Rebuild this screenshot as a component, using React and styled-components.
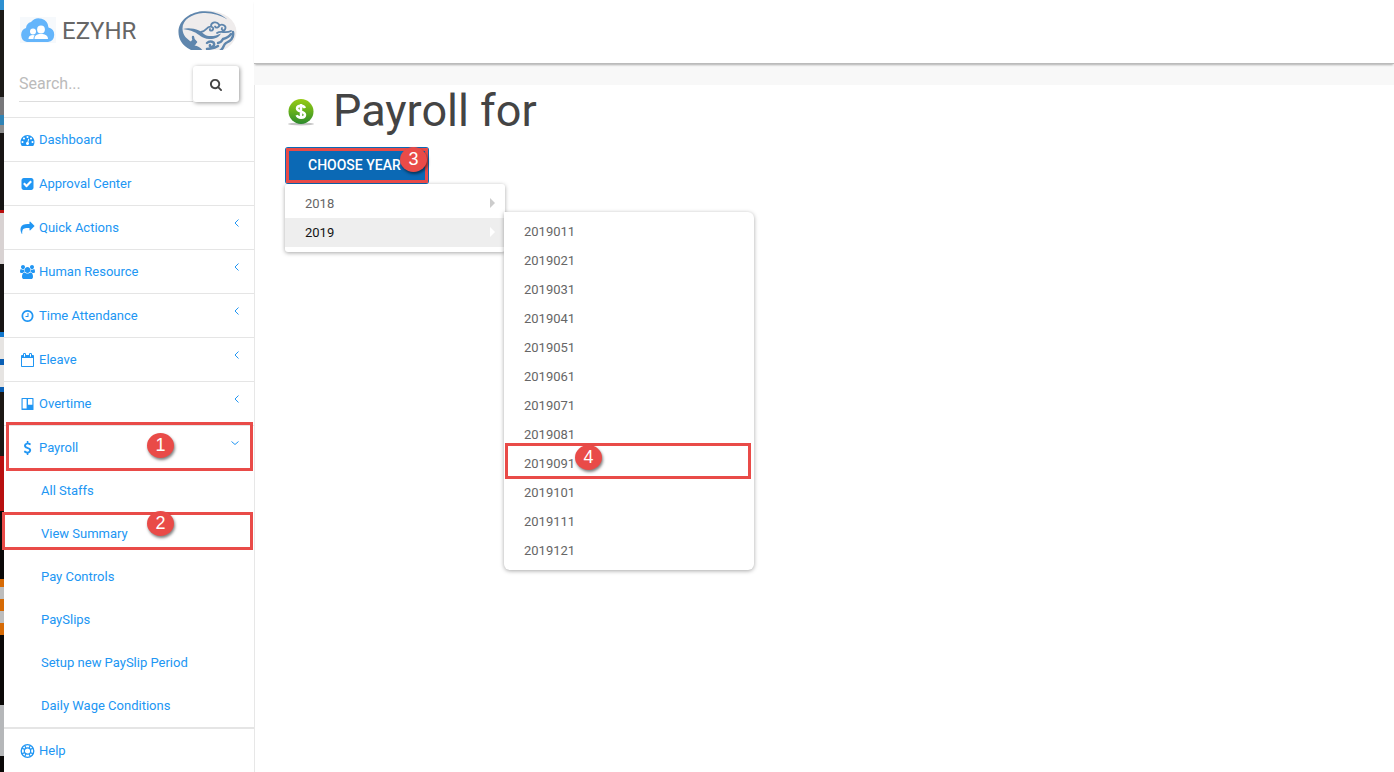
import React from "react";
import styled, { createGlobalStyle, css } from "styled-components";

const GlobalStyle = createGlobalStyle`
  *, *::before, *::after {
    box-sizing: border-box;
  }

  body {
    margin: 0;
    background: #fff;
    color: #666;
    font-family: Roboto, "Liberation Sans", sans-serif;
    font-size: 13px;
    line-height: 23px;
  }

  ul {
    margin: 0;
    padding: 0;
    list-style: none;
  }

  a {
    color: #2196f3;
    text-decoration: none;
  }
`;

const Screen = styled.div`
  display: flex;
  min-height: 100vh;
`;

const DesktopEdge = styled.div`
  flex: 0 0 4px;
  background: linear-gradient(
    #2d8fd0 0 10px,
    #1c1a18 10px 97px,
    #77777a 97px 115px,
    #2f83b5 115px 125px,
    #8c8c8c 125px 133px,
    #171514 133px 210px,
    #b80d0c 210px 213px,
    #d8d2d2 213px 264px,
    #171514 264px 332px,
    #1277cc 332px 337px,
    #e6e4e2 337px 359px,
    #0a5fb4 359px 365px,
    #e6e4e2 365px 387px,
    #0a5fb4 387px 392px,
    #1c1814 392px 456px,
    #b8100f 456px 511px,
    #0a0807 511px 579px,
    #d66a05 579px 587px,
    #bdbdbd 587px 599px,
    #d66a05 599px 611px,
    #bdbdbd 611px 623px,
    #d66a05 623px 635px,
    #0a0807 635px 705px,
    #b5b7b9 705px 756px,
    #0a0807 756px
  );
`;

const Sidebar = styled.aside`
  flex: 0 0 251px;
  min-width: 0;
  display: flex;
  flex-direction: column;
  border-right: 1px solid #e7e7e7;
`;

const Brand = styled.div`
  display: flex;
  align-items: center;
  height: 64px;
  padding: 0 17px 2px 16px;

  a {
    display: flex;
    align-items: center;
    gap: 6px;
    flex: 1;
    color: #666;
    font-size: 24px;
  }
`;

const SearchForm = styled.form`
  display: flex;
  align-items: flex-end;
  height: 53px;
  padding: 0 15px 15px;

  input {
    flex: 1;
    width: 0;
    min-width: 0;
    height: 37px;
    padding: 0;
    border: 0;
    box-shadow: inset 0 -1px 0 #ddd;
    outline: none;
    font: 16px/23px Roboto, "Liberation Sans", sans-serif;
  }

  input::placeholder {
    color: #bbb;
  }

  button {
    display: flex;
    align-items: center;
    justify-content: center;
    width: 46px;
    height: 36px;
    padding: 0;
    border: 0;
    border-radius: 3px;
    background: #fff;
    color: #444;
    box-shadow: 1px 1px 4px rgba(0, 0, 0, 0.4);
  }
`;

const Nav = styled.nav`
  flex: 1;
`;

const NavItem = styled.li`
  border-top: 1px solid #e5e5e5;
`;

const NavLink = styled.a`
  position: relative;
  display: flex;
  align-items: center;
  gap: 4px;
  height: 43px;
  padding: 0 14px 0 16px;
`;

const NavLabel = styled.span`
  flex: 1;
`;

const Arrow = styled.svg`
  align-self: flex-start;
  width: 10px;
  height: 10px;
  margin-top: 12px;
  fill: none;
  stroke: currentColor;
`;

const SubMenu = styled.ul`
  border-bottom: 1px solid #e5e5e5;
`;

const SubLink = styled.a`
  position: relative;
  display: flex;
  align-items: center;
  height: 43px;
  padding-left: 37px;
`;

const Main = styled.main`
  flex: 1;
  min-width: 0;
  margin-left: -1px;
`;

const TopBar = styled.header`
  position: relative;
  height: 64px;
  background: #fff;
  box-shadow: 0 2px 2px -1px rgba(0, 0, 0, 0.3);
  border-bottom: 1px solid #bbb;
`;

const Band = styled.div`
  height: 21px;
  background: #f8f8f8;
`;

const Content = styled.section`
  padding: 1px 31px 0;
`;

const Title = styled.h1`
  display: flex;
  align-items: center;
  gap: 16px;
  height: 50px;
  margin: 0 0 11px;
  color: #444;
  font-size: 45px;
  font-weight: 400;
  line-height: 50px;
`;

const Dropdown = styled.div`
  position: relative;
  width: 144px;
`;

const ChooseButton = styled.button`
  position: relative;
  display: block;
  width: 100%;
  height: 37px;
  padding: 0 23px;
  border: 0;
  border-radius: 3px;
  background: #0b69b5;
  color: #fff;
  font: 500 14px/23px Roboto, "Liberation Sans", sans-serif;
  text-align: left;
  text-transform: uppercase;
  white-space: nowrap;
`;

const menu = css`
  position: absolute;
  padding: 5px 0;
  background: #fff;
  box-shadow: 0 1px 4px rgba(0, 0, 0, 0.35);
`;

const YearMenu = styled.ul`
  ${menu}
  top: 37px;
  left: 0;
  width: 220px;
  border-radius: 3px;
`;

const PeriodMenu = styled.ul`
  ${menu}
  top: -6px;
  left: 219px;
  width: 250px;
  border-radius: 0 6px 6px 6px;
`;

const MenuItem = styled.li`
  position: relative;
`;

const MenuLink = styled.a`
  position: relative;
  display: flex;
  align-items: center;
  justify-content: space-between;
  height: 29px;
  padding: 0 10px 0 20px;
  background: ${({ $active }) => ($active ? "#eee" : "transparent")};
  color: ${({ $active }) => ($active ? "#141414" : "#666")};

  svg {
    width: 5px;
    height: 10px;
    margin-bottom: 2px;
    fill: ${({ $active }) => ($active ? "#fff" : "#ccc")};
  }
`;

const Highlight = styled.span`
  position: absolute;
  z-index: 2;
  inset: ${({ $inset }) => $inset};
  border: 3px solid #e94b48;
  pointer-events: none;
`;

const Step = styled.span`
  position: absolute;
  z-index: 3;
  top: ${({ $top }) => $top}px;
  left: ${({ $left }) => $left}px;
  width: 27px;
  height: 25px;
  border-radius: 50%;
  background: #e94b48;
  box-shadow: 1px 2px 3px rgba(0, 0, 0, 0.5);
  color: #fff;
  font: 18px/24px "Liberation Sans", sans-serif;
  text-align: center;
`;

const GLYPHS = {
  dashboard:
    "M384 1152q0-53-37.5-90.5t-90.5-37.5-90.5 37.5-37.5 90.5 37.5 90.5 90.5 37.5 90.5-37.5 37.5-90.5zm192-448q0-53-37.5-90.5t-90.5-37.5-90.5 37.5-37.5 90.5 37.5 90.5 90.5 37.5 90.5-37.5 37.5-90.5zm428 481l101-382q6-26-7.5-48.5t-38.5-29.5-48 6.5-30 39.5l-101 382q-60 5-107 43.5t-63 98.5q-20 77 20 146t117 89 146-20 89-117q16-60-6-117t-72-91zm660-33q0-53-37.5-90.5t-90.5-37.5-90.5 37.5-37.5 90.5 37.5 90.5 90.5 37.5 90.5-37.5 37.5-90.5zm-640-640q0-53-37.5-90.5t-90.5-37.5-90.5 37.5-37.5 90.5 37.5 90.5 90.5 37.5 90.5-37.5 37.5-90.5zm448 192q0-53-37.5-90.5t-90.5-37.5-90.5 37.5-37.5 90.5 37.5 90.5 90.5 37.5 90.5-37.5 37.5-90.5zm320 448q0 261-141 483-19 29-54 29h-1402q-35 0-54-29-141-221-141-483 0-182 71-348t191-286 286-191 348-71 348 71 286 191 191 286 71 348z",
  check:
    "M813 1299l614-614q19-19 19-45t-19-45l-102-102q-19-19-45-19t-45 19l-467 467-211-211q-19-19-45-19t-45 19l-102 102q-19 19-19 45t19 45l358 358q19 19 45 19t45-19zm851-883v960q0 119-84.5 203.5t-203.5 84.5h-960q-119 0-203.5-84.5t-84.5-203.5v-960q0-119 84.5-203.5t203.5-84.5h960q119 0 203.5 84.5t84.5 203.5z",
  share:
    "M1792 640q0 26-19 45l-512 512q-19 19-45 19t-45-19-19-45v-256h-224q-98 0-175.5 6t-154 21.5-133 42.5-105.5 69.5-80 101-48.5 138.5-17.5 181q0 55 5 123 0 6 2.5 23.5t2.5 26.5q0 15-8.5 25t-23.5 10q-16 0-28-17-7-9-13-22t-13.5-30-10.5-24q-127-285-127-451 0-199 53-333 162-403 875-403h224v-256q0-26 19-45t45-19 45 19l512 512q19 19 19 45z",
  group:
    "M593 896q-162 5-265 128h-134q-82 0-138-40.5t-56-118.5q0-353 124-353 6 0 43.5 21t97.5 42.5 119 21.5q67 0 133-23-5 37-5 66 0 139 81 256zm1071 637q0 120-73 189.5t-194 69.5h-874q-121 0-194-69.5t-73-189.5q0-53 3.5-103.5t14-109 26.5-108.5 43-97.5 62-81 85.5-53.5 111.5-20q10 0 43 21.5t73 48 107 48 135 21.5 135-21.5 107-48 73-48 43-21.5q61 0 111.5 20t85.5 53.5 62 81 43 97.5 26.5 108.5 14 109 3.5 103.5zm-1024-1277q0 106-75 181t-181 75-181-75-75-181 75-181 181-75 181 75 75 181zm704 384q0 159-112.5 271.5t-271.5 112.5-271.5-112.5-112.5-271.5 112.5-271.5 271.5-112.5 271.5 112.5 112.5 271.5zm576 225q0 78-56 118.5t-138 40.5h-134q-103-123-265-128 81-117 81-256 0-29-5-66 66 23 133 23 59 0 119-21.5t97.5-42.5 43.5-21q124 0 124 353zm-128-609q0 106-75 181t-181 75-181-75-75-181 75-181 181-75 181 75 75 181z",
  clock:
    "M1024 544v448q0 14-9 23t-23 9h-320q-14 0-23-9t-9-23v-64q0-14 9-23t23-9h224v-352q0-14 9-23t23-9h64q14 0 23 9t9 23zm416 352q0-148-73-273t-198-198-273-73-273 73-198 198-73 273 73 273 198 198 273 73 273-73 198-198 73-273zm224 0q0 209-103 385.5t-279.5 279.5-385.5 103-385.5-103-279.5-279.5-103-385.5 103-385.5 279.5-279.5 385.5-103 385.5 103 279.5 279.5 103 385.5z",
  calendar:
    "M192 1664h1408v-1024h-1408v1024zm384-1216v-288q0-14-9-23t-23-9h-64q-14 0-23 9t-9 23v288q0 14 9 23t23 9h64q14 0 23-9t9-23zm768 0v-288q0-14-9-23t-23-9h-64q-14 0-23 9t-9 23v288q0 14 9 23t23 9h64q14 0 23-9t9-23zm384-64v1280q0 52-38 90t-90 38h-1408q-52 0-90-38t-38-90v-1280q0-52 38-90t90-38h128v-96q0-66 47-113t113-47h64q66 0 113 47t47 113v96h384v-96q0-66 47-113t113-47h64q66 0 113 47t47 113v96h128q52 0 90 38t38 90z",
  board:
    "M192 128h1408q64 0 64 64v1408q0 64-64 64h-1408q-64 0-64-64v-1408q0-64 64-64zm80 160v1152q0 32 32 32h448q32 0 32-32v-1152q0-32-32-32h-448q-32 0-32 32zm688 0v672q0 32 32 32h496q32 0 32-32v-672q0-32-32-32h-496q-32 0-32 32z",
  dollar:
    "M1362 1185q0 153-99.5 263.5t-258.5 136.5v175q0 14-9 23t-23 9h-135q-13 0-22.5-9.5t-9.5-22.5v-175q-66-9-127.5-31t-101.5-44.5-74-48-46.5-37.5-17.5-18q-17-21-2-41l103-135q7-10 23-12 15-2 24 9l2 2q113 99 243 125 37 8 74 8 81 0 142.5-43t61.5-122q0-28-15-53t-33.5-42-58.5-37.5-66-32-80-32.5q-39-16-61.5-25t-61.5-26.5-62.5-31-56.5-35.5-53.5-42.5-43.5-49-35.5-58-21-66.5-8.5-78q0-138 98-242t255-134v-180q0-13 9.5-22.5t22.5-9.5h135q14 0 23 9t9 23v176q57 6 110.5 23t87 33.5 63.5 37.5 39 29 15 14q17 18 5 38l-81 146q-8 15-23 16-14 3-27-7-3-3-14.5-12t-39-26.5-58.5-32-74.5-26-85.5-11.5q-95 0-155 43t-60 111q0 26 8.5 48t29.5 41.5 39.5 33 56 31 60.5 27 70 27.5q53 20 81 31.5t76 35 75.5 42.5 62 50 53 63.5 31.5 76.5 13 94z",
  search:
    "M1216 832q0-185-131.5-316.5t-316.5-131.5-316.5 131.5-131.5 316.5 131.5 316.5 316.5 131.5 316.5-131.5 131.5-316.5zm512 832q0 52-38 90t-90 38q-54 0-90-38l-343-342q-179 124-399 124-143 0-273.5-55.5t-225-150-150-225-55.5-273.5 55.5-273.5 150-225 225-150 273.5-55.5 273.5 55.5 225 150 150 225 55.5 273.5q0 220-124 399l343 343q37 37 37 90z",
};

function Glyph({ name, size = 14 }) {
  if (name === "help") {
    return (
      <svg width="15" height="14" viewBox="0 0 14 14" fill="none" stroke="currentColor" aria-hidden="true">
        <circle cx="7" cy="7" r="6.3" strokeWidth="1.3" />
        <circle cx="7" cy="7" r="3.2" strokeWidth="1.2" />
        <path
          strokeWidth="1.2"
          d="M1.600 4.400l2.800 1M4.400 1.600l1 2.800M12.400 4.400l-2.800 1M9.600 1.600l-1 2.800M1.600 9.600l2.800-1M4.400 12.400l1-2.800M12.400 9.600l-2.800-1M9.600 12.400l-1-2.800"
        />
      </svg>
    );
  }
  return (
    <svg
      width={size + 1}
      height={size}
      viewBox={name === "group" ? "0 0 1920 1792" : "0 0 1792 1792"}
      fill="currentColor"
      fillRule={name === "board" ? "evenodd" : "nonzero"}
      aria-hidden="true"
    >
      <path d={GLYPHS[name]} />
    </svg>
  );
}

function CloudLogo() {
  return (
    <svg width="36" height="28" viewBox="0 0 36 28" aria-hidden="true">
      <path fill="#f6f9fc" d="M0 0h36v26H0z" />
      <path
        fill="#64b5fb"
        d="M7 25a7.300 7.300 0 0 1-1-14 7 7 0 0 1 5-6A9.800 9.800 0 0 1 28.500 10.500a7.400 7.400 0 0 1-.5 14.500z"
      />
      <g fill="#fff">
        <circle cx="21" cy="12.500" r="3.900" />
        <circle cx="13" cy="14.500" r="3" />
        <path d="M14.500 22c0-3.500 2-5 6.500-5s7 1.500 7 5zM8.500 22c0-2.800 1.500-4 4.500-4 .7 0 1.300.2 1.800.5-.8.9-1.300 2-1.300 3.500z" />
      </g>
    </svg>
  );
}

function WaveLogo() {
  return (
    <svg width="60" height="42" viewBox="0 0 60 42" aria-hidden="true">
      <clipPath id="crop">
        <path d="M0 0h60v40H0z" />
      </clipPath>
      <g clipPath="url(#crop)" fill="none" stroke="#5f86ad" strokeLinecap="round" strokeLinejoin="round">
        <ellipse cx="30.500" cy="22" rx="29" ry="21.500" fill="#efecec" stroke="none" />
        <path
          fill="#5f86ad"
          stroke="none"
          d="M50.500 9.500C44 3.500 34 .5 25 1.300 11 2.800 1.500 11.500 1.500 22c0 7 3.500 12.500 9 16l7 4h9c-2-4-5-6-9-6.500 2-1 2.500-3.500 1-5-1.500-1.300-4-.8-4.500 1-3.500-2-8.500-6-8.500-13C5.500 9.500 15 3.800 26 3c9-.5 17 2 24.500 6.500z"
        />
        <path
          fill="#5f86ad"
          stroke="none"
          d="M6 19c5-1.500 11-.5 16 1.500 4 1.800 5 5 10 5.500 4 .4 8-.5 12-2.500-2 4-7 5.800-12 5.500-7-.3-10-5-15-7-4-1.800-8-2.500-11-3z"
        />
        <path strokeWidth="1.800" d="M24 22c4-.5 5-3 7-4.500 3-2 6 0 5 2s-4 1-3-.5M34 16c0-4 6-5 8-1.500 1 3-3 4-4 2M42 16c3-3 8 0 6 3.500-2 2-4 0-3-1.500M40 23c4-3 8 1 14-2" />
        <path strokeWidth="2.400" d="M56 22c1 5-2 9-7 11-3 2-2 5-6 8M46 29c4-1 6-2 8-5M41 33c3-.5 4-2 5-4M30 33c3-3 8-1 7 2s-5 2-4 0M30 39c4-1 7 0 11-3M16 27c0 3 1 4 3 5" />
      </g>
    </svg>
  );
}

function CoinIcon() {
  return (
    <svg width="32" height="32" viewBox="0 0 32 32" aria-hidden="true">
      <defs>
        <linearGradient id="coin" x1="0" y1="0" x2="0" y2="1">
          <stop offset="0" stopColor="#98cb16" />
          <stop offset="0.5" stopColor="#64af1c" />
          <stop offset="1" stopColor="#2c8a2e" />
        </linearGradient>
      </defs>
      <ellipse cx="16" cy="29" rx="13" ry="1.500" fill="#c4c4c4" />
      <circle cx="16" cy="16.500" r="12.500" fill="url(#coin)" />
      <path
        d="M20 13c-.8-1.700-2.200-2.300-4-2.300-2.500 0-4 1.200-4 2.800 0 3.800 8 2.400 8 6.200 0 1.800-1.700 3-4 3-2 0-3.600-.8-4.300-2.600M16 9v15"
        fill="none"
        stroke="#fff"
        strokeWidth="2.500"
      />
    </svg>
  );
}

const navItems = [
  { icon: "dashboard", label: "Dashboard" },
  { icon: "check", label: "Approval Center" },
  { icon: "share", label: "Quick Actions", more: true },
  { icon: "group", label: "Human Resource", more: true },
  { icon: "clock", label: "Time Attendance", more: true },
  { icon: "calendar", label: "Eleave", more: true },
  { icon: "board", label: "Overtime", more: true },
];

const payrollItems = [
  "All Staffs",
  "View Summary",
  "Pay Controls",
  "PaySlips",
  "Setup new PaySlip Period",
  "Daily Wage Conditions",
];

const periods = Array.from({ length: 12 }, (_, i) => `2019${String(i + 1).padStart(2, "0")}1`);

export default function App() {
  return (
    <Screen>
      <GlobalStyle />
      <DesktopEdge />
      <Sidebar>
        <Brand>
          <a href="#home">
            <CloudLogo />
            EZYHR
          </a>
          <WaveLogo />
        </Brand>
        <SearchForm>
          <input type="text" placeholder="Search..." aria-label="Search" />
          <button type="button" aria-label="Search">
            <Glyph name="search" size={13} />
          </button>
        </SearchForm>
        <Nav>
          <ul>
            {navItems.map(({ icon, label, more }) => (
              <NavItem key={label}>
                <NavLink href="#nav">
                  <Glyph name={icon} />
                  <NavLabel>{label}</NavLabel>
                  {more && (
                    <Arrow viewBox="0 0 10 10">
                      <path d="M8.500 1.500L5 5l3.500 3.500" />
                    </Arrow>
                  )}
                </NavLink>
              </NavItem>
            ))}
            <NavItem>
              <NavLink href="#payroll">
                <Glyph name="dollar" />
                <NavLabel>Payroll</NavLabel>
                <Arrow viewBox="0 0 10 10">
                  <path d="M1.500 3.500L5 6.500l3.500-3" />
                </Arrow>
                <Highlight $inset="-4px 1px -2px 2px" />
                <Step $top={7} $left={143}>1</Step>
              </NavLink>
              <SubMenu>
                {payrollItems.map((label) => (
                  <li key={label}>
                    <SubLink href="#payroll">
                      {label}
                      {label === "View Summary" && (
                        <>
                          <Highlight $inset="0 1px 5px -2px" />
                          <Step $top={-1} $left={143}>2</Step>
                        </>
                      )}
                    </SubLink>
                  </li>
                ))}
              </SubMenu>
            </NavItem>
            <NavItem>
              <NavLink href="#help">
                <Glyph name="help" />
                <NavLabel>Help</NavLabel>
              </NavLink>
            </NavItem>
          </ul>
        </Nav>
      </Sidebar>
      <Main>
        <TopBar />
        <Band />
        <Content>
          <Title>
            <CoinIcon />
            Payroll for
          </Title>
          <Dropdown>
            <ChooseButton type="button">
              Choose Year
              <Highlight $inset="1px" />
              <Step $top={0} $left={115}>3</Step>
            </ChooseButton>
            <YearMenu>
              <MenuItem>
                <MenuLink href="#2018">
                  2018
                  <svg viewBox="0 0 5 10"><path d="M0 0l5 5-5 5z" /></svg>
                </MenuLink>
              </MenuItem>
              <MenuItem>
                <MenuLink href="#2019" $active>
                  2019
                  <svg viewBox="0 0 5 10"><path d="M0 0l5 5-5 5z" /></svg>
                </MenuLink>
                <PeriodMenu>
                  {periods.map((period) => (
                    <li key={period}>
                      <MenuLink href="#period">
                        {period}
                        {period === "2019091" && (
                          <>
                            <Highlight $inset="-6px 3px -1px 1px" />
                            <Step $top={-4} $left={71}>4</Step>
                          </>
                        )}
                      </MenuLink>
                    </li>
                  ))}
                </PeriodMenu>
              </MenuItem>
            </YearMenu>
          </Dropdown>
        </Content>
      </Main>
    </Screen>
  );
}
